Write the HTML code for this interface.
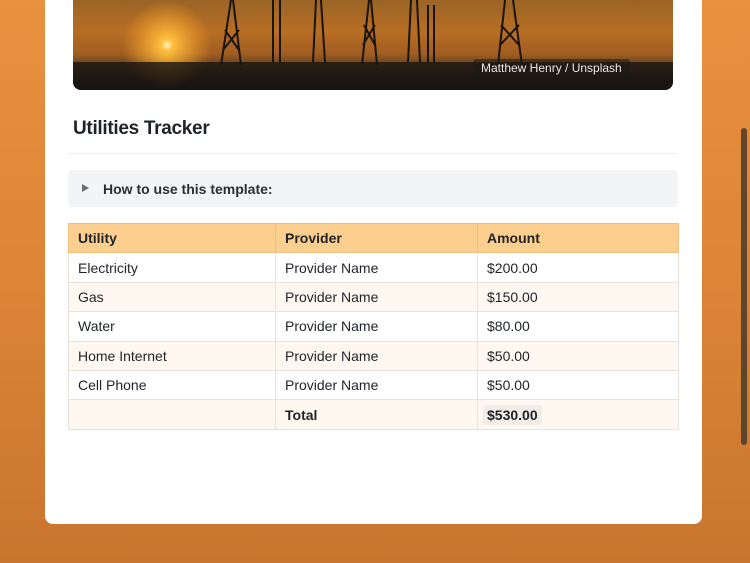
<!DOCTYPE html>
<html><head><style>
*{margin:0;padding:0;box-sizing:border-box}
body{width:750px;height:563px;overflow:hidden;background:linear-gradient(180deg,#e8913f 0%,#dc8537 50%,#c9752f 100%);font-family:"Liberation Sans",sans-serif;position:relative}
.card{position:absolute;left:45px;top:-20px;width:657px;height:544px;background:#fff;border-radius:8px}
.img{position:absolute;left:73px;top:0;width:600px;height:90px;border-radius:0 0 8px 8px;overflow:hidden;background:linear-gradient(180deg,#9a6426 0%,#b86e24 35%,#a05e22 60%,#4a3322 78%,#1e1814 90%,#15120f 100%)}
.cap{position:absolute;top:59px;padding:2px 8px;background:rgba(30,25,20,.55);color:#e8e8e8;font-size:12px;border-radius:3px}
h1{position:absolute;left:73px;top:118px;font-size:19px;font-weight:bold;color:#1f2328;letter-spacing:-.3px}
.hr{position:absolute;left:68px;top:153px;width:610px;height:1px;background:#eeeeee}
.tog{position:absolute;left:68px;top:170px;width:610px;height:37px;background:#f2f4f6;border-radius:4px;font-size:14px;font-weight:bold;color:#2b2f33;padding:11px 0 0 35px}
.tog:before{content:"";position:absolute;left:14px;top:14px;border-left:7px solid #6a7075;border-top:4px solid transparent;border-bottom:4px solid transparent}
table{position:absolute;left:68px;top:223px;width:611px;border-collapse:collapse;font-size:14px;color:#1f2328}
td,th{border:1px solid #e8e2da;height:29.4px;padding:0 9px;text-align:left}
th{background:#fdcf8e;border-color:#f0c080;font-weight:bold}
tr:nth-child(odd) td{background:#fef8f0}
.tot{background:#f1ece6;padding:2px 4px;margin-left:-4px;border-radius:3px;font-weight:bold}
.sb{position:absolute;left:741px;top:128px;width:6px;height:317px;background:#4a3a2c;border-radius:3px;opacity:.85}
</style></head><body>
<div class="card"></div>
<div class="img">
<svg width="600" height="90" style="position:absolute;left:0;top:0">
<radialGradient id="s" cx="94" cy="45" r="45" gradientUnits="userSpaceOnUse"><stop offset="0" stop-color="#fff8d0"/><stop offset=".12" stop-color="#ffc040"/><stop offset="1" stop-color="#ffa020" stop-opacity="0"/></radialGradient>
<circle cx="94" cy="45" r="45" fill="url(#s)"/>
<g stroke="#1a1410" stroke-width="2" fill="none">
<path d="M148 65 L158 0 M168 65 L160 0 M150 50 L166 30 M166 50 L152 30"/>
<path d="M289 65 L296 0 M304 65 L298 0 M290 45 L302 25 M302 45 L291 25"/>
<path d="M425 65 L432 0 M449 65 L440 0 M427 45 L446 25 M446 45 L428 25"/>
<path d="M240 62 L243 0 M252 62 L248 0 M335 62 L338 0 M347 62 L344 0 M200 62 V0 M207 62 V0 M355 62 V5 M361 62 V5"/>
</g>
<rect x="0" y="62" width="600" height="28" fill="#1a1511" opacity=".8"/>
</svg>
<div class="cap" style="left:400px">Matthew Henry / Unsplash</div>
</div>
<h1>Utilities Tracker</h1>
<div class="hr"></div>
<div class="tog">How to use this template:</div>
<table>
<tr><th style="width:207px">Utility</th><th style="width:202px">Provider</th><th>Amount</th></tr>
<tr><td>Electricity</td><td>Provider Name</td><td>$200.00</td></tr>
<tr><td>Gas</td><td>Provider Name</td><td>$150.00</td></tr>
<tr><td>Water</td><td>Provider Name</td><td>$80.00</td></tr>
<tr><td>Home Internet</td><td>Provider Name</td><td>$50.00</td></tr>
<tr><td>Cell Phone</td><td>Provider Name</td><td>$50.00</td></tr>
<tr><td></td><td><b>Total</b></td><td><span class="tot">$530.00</span></td></tr>
</table>
<div class="sb"></div>
</body></html>
